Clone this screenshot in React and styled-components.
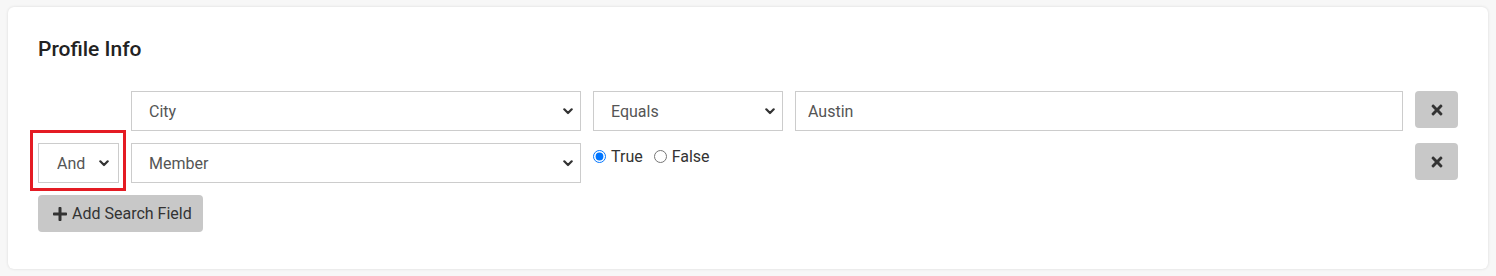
import React from "react";
import styled, { createGlobalStyle } from "styled-components";
import { FaTimes, FaPlus } from "react-icons/fa";

const GlobalStyle = createGlobalStyle`
  html, body { margin: 0; padding: 0; background: #f7f7f7; }
  body { font-family: Roboto, "Noto Sans", "Liberation Sans", sans-serif; }
  * { box-sizing: border-box; }
`;

const Page = styled.div`
  padding: 7px 8px 7px 8px;
`;

const Card = styled.section`
  background: #fff;
  border-radius: 6px;
  box-shadow: 0 0 3px rgba(0, 0, 0, 0.12);
  padding: 29px 30px 37px 30px;
`;

const Title = styled.h2`
  margin: 0 0 29px 0;
  font-size: 21px;
  line-height: 26px;
  font-weight: 500;
  color: #222;
`;

const Rows = styled.div`
  display: flex;
  flex-direction: column;
  gap: 12px;
`;

const Row = styled.div`
  display: grid;
  grid-template-columns: 81px 450px 190px 1fr 43px;
  column-gap: 12px;
  align-items: start;
`;

const ConnectorCell = styled.div`
  position: relative;
  height: 40px;
`;

const Highlight = styled.div`
  position: absolute;
  top: -13px;
  bottom: -8px;
  left: -8px;
  right: -7px;
  border: 3px solid #e41b23;
  pointer-events: none;
`;

const chevron =
  "url(\"data:image/svg+xml;utf8,<svg xmlns='http://www.w3.org/2000/svg' width='10' height='7' viewBox='0 0 10 7'><path d='M1.3 1.3 L5 5 L8.7 1.3' fill='none' stroke='%23333' stroke-width='2.2' stroke-linecap='round' stroke-linejoin='round'/></svg>\")";

const Select = styled.select`
  appearance: none;
  -webkit-appearance: none;
  width: 100%;
  height: 40px;
  border: 1px solid #cccccc;
  border-radius: 0;
  background: #fff ${chevron} no-repeat right ${(p) => p.$chevRight || 7}px center;
  padding: 0 24px 0 ${(p) => p.$padLeft || 17}px;
  font-family: Roboto, "Noto Sans", "Liberation Sans", sans-serif;
  font-size: 16px;
  color: #555;
  outline: none;
`;

const TextInput = styled.input`
  width: 100%;
  height: 40px;
  border: 1px solid #cccccc;
  border-radius: 0;
  padding: 0 12px;
  font-family: Roboto, "Noto Sans", "Liberation Sans", sans-serif;
  font-size: 16px;
  color: #555;
  outline: none;
`;

const GreyButton = styled.button`
  display: inline-flex;
  align-items: center;
  justify-content: center;
  gap: 4px;
  height: 37px;
  border: none;
  border-radius: 4px;
  background: #c8c8c8;
  color: #333;
  font-family: Roboto, "Noto Sans", "Liberation Sans", sans-serif;
  font-size: 16px;
  padding: ${(p) => (p.$icon ? "0" : "0 11px 0 14px")};
  width: ${(p) => (p.$icon ? "43px" : "auto")};
  cursor: pointer;
`;

const RadioGroup = styled.div`
  grid-column: 3 / 5;
  display: flex;
  align-items: center;
  gap: 11px;
  padding-top: 1px;
  height: 26px;
`;

const RadioLabel = styled.label`
  display: inline-flex;
  align-items: center;
  gap: 5px;
  font-size: 16px;
  color: #333;
`;

const Radio = styled.input`
  margin: 0;
  width: 13px;
  height: 13px;
  accent-color: #0075ff;
`;

const AddRow = styled.div`
  margin-top: 12px;
`;

export default function App() {
  return (
    <Page>
      <GlobalStyle />
      <Card>
        <Title>Profile Info</Title>
        <Rows>
          <Row>
            <ConnectorCell />
            <Select defaultValue="City">
              <option>City</option>
              <option>Member</option>
            </Select>
            <Select defaultValue="Equals">
              <option>Equals</option>
            </Select>
            <TextInput defaultValue="Austin" />
            <GreyButton $icon aria-label="Remove">
              <FaTimes size={16} />
            </GreyButton>
          </Row>
          <Row>
            <ConnectorCell>
              <Select defaultValue="And" $padLeft={18} $chevRight={9}>
                <option>And</option>
                <option>Or</option>
              </Select>
              <Highlight />
            </ConnectorCell>
            <Select defaultValue="Member">
              <option>City</option>
              <option>Member</option>
            </Select>
            <RadioGroup>
              <RadioLabel>
                <Radio type="radio" name="member" defaultChecked /> True
              </RadioLabel>
              <RadioLabel>
                <Radio type="radio" name="member" /> False
              </RadioLabel>
            </RadioGroup>
            <GreyButton $icon aria-label="Remove">
              <FaTimes size={16} />
            </GreyButton>
          </Row>
        </Rows>
        <AddRow>
          <GreyButton>
            <FaPlus size={16} /> Add Search Field
          </GreyButton>
        </AddRow>
      </Card>
    </Page>
  );
}
